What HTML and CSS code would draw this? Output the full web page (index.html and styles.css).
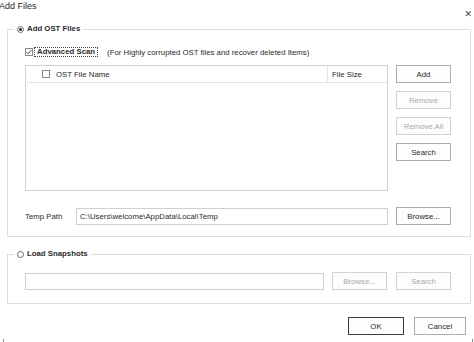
FILE: index.html
```html
<!DOCTYPE html>
<html lang="en">
<head>
    <meta charset="UTF-8">
    <meta name="viewport" content="width=device-width, initial-scale=1.0">
    <title>Add Files</title>
    <link rel="stylesheet" href="styles.css">
</head>
<body>

<div class="dialog">
    <div class="titlebar">
        <span class="title">Add Files</span>
        <span class="close">✕</span>
    </div>

    <fieldset class="group group-ost">
        <legend><span class="radio checked"></span>Add OST Files</legend>
        <div class="group-body">
            <div class="scan-row">
                <span class="checkbox">
                    <svg width="6" height="6" viewBox="0 0 6 6">
                        <path d="M0.6 3.1 L2.3 4.8 L5.5 0.9" stroke="#333" stroke-width="0.9" fill="none"/>
                    </svg>
                </span>
                <span class="scan-label">Advanced Scan</span>
                <span class="scan-note">(For Highly corrupted OST files and recover deleted Items)</span>
            </div>

            <div class="list-row">
                <div class="file-list">
                    <div class="list-head">
                        <div class="col col-name"><span class="checkbox"></span>OST File Name</div>
                        <div class="col col-size">File Size</div>
                    </div>
                </div>
                <div class="side-buttons">
                    <button class="btn">Add</button>
                    <button class="btn" disabled>Remove</button>
                    <button class="btn" disabled>Remove All</button>
                    <button class="btn">Search</button>
                </div>
            </div>

            <div class="path-row">
                <span class="path-label">Temp Path</span>
                <input class="field field-path" type="text" value="C:\Users\welcome\AppData\Local\Temp">
                <button class="btn">Browse...</button>
            </div>
        </div>
    </fieldset>

    <fieldset class="group group-snap">
        <legend><span class="radio"></span>Load Snapshots</legend>
        <div class="group-body">
            <div class="snap-row">
                <input class="field field-snap" type="text" value="">
                <button class="btn" disabled>Browse...</button>
                <button class="btn btn-search" disabled>Search</button>
            </div>
        </div>
    </fieldset>

    <div class="actions">
        <button class="btn btn-ok">OK</button>
        <button class="btn btn-cancel">Cancel</button>
    </div>

    <div class="frame-edge"></div>
</div>

</body>
</html>
```

FILE: styles.css
```css
body {
    margin: 0;
    background: #fff;
    font-family: "Liberation Sans", Arial, sans-serif;
    font-size: 7.8px;
    color: #2a2a2a;
}
.dialog {
    width: 474px;
    height: 342px;
    overflow: hidden;
}
.titlebar {
    height: 22px;
    display: flex;
    align-items: flex-start;
}
.title {
    flex: 1;
    font-size: 9px;
    line-height: 13px;
    margin-left: -1px;
}
.close {
    margin: 8px 2px 0 0;
    font-family: "DejaVu Sans", sans-serif;
    font-size: 9px;
    line-height: 12px;
    color: #444;
}

/* group boxes */
.group {
    margin: 1px 3px 0 7px;
    padding: 0;
    border: 1px solid #dcdcdc;
    min-width: 0;
}
.group legend {
    margin-left: 6px;
    padding: 0 3px;
    height: 12px;
    line-height: 12px;
    display: flex;
    align-items: center;
    gap: 3px;
    font-weight: bold;
}
.group-ost .group-body {
    padding: 11px 19px 11px 17px;
}
.group-snap {
    margin-top: 11px;
}
.group-snap .group-body {
    padding: 12px 19px 13px 17px;
}

.radio {
    width: 7px;
    height: 7px;
    box-sizing: border-box;
    border: 1px solid #6a6a6a;
    border-radius: 50%;
    display: flex;
    align-items: center;
    justify-content: center;
}
.radio.checked::after {
    content: "";
    width: 3px;
    height: 3px;
    border-radius: 50%;
    background: #222;
}
.checkbox {
    width: 8px;
    height: 8px;
    box-sizing: border-box;
    border: 1px solid #8a8a8a;
    display: flex;
    align-items: center;
    justify-content: center;
    flex-shrink: 0;
}

/* advanced scan */
.scan-row {
    display: flex;
    align-items: center;
    height: 12px;
}
.scan-label {
    margin-left: 1px;
    padding: 0 2px;
    border: 1px dotted #444;
    line-height: 8px;
    font-weight: bold;
}
.scan-note {
    margin-left: 9px;
}

/* file list */
.list-row {
    display: flex;
    gap: 8px;
    margin-top: 7px;
}
.file-list {
    width: 363px;
    height: 126px;
    box-sizing: border-box;
    border: 1px solid #d0d0d0;
}
.list-head {
    display: flex;
    height: 17px;
    box-sizing: border-box;
    margin-left: 1px;
    border-bottom: 1px solid #e2e2e2;
}
.col {
    display: flex;
    align-items: center;
}
.col-name {
    width: 301px;
    box-sizing: border-box;
    padding-left: 15px;
    gap: 6px;
    border-right: 1px solid #e2e2e2;
}
.col-size {
    padding-left: 4px;
}
.side-buttons {
    display: flex;
    flex-direction: column;
    gap: 8px;
}

.btn {
    width: 55px;
    height: 18px;
    padding: 0;
    border: 1px solid #adadad;
    background: #fdfdfd;
    font: inherit;
    color: inherit;
}
.btn:disabled {
    border-color: #d2d2d2;
    color: #a8a8a8;
}
.field {
    height: 17px;
    box-sizing: border-box;
    padding: 0 3px;
    border: 1px solid #cfcfcf;
    background: #fff;
    font: inherit;
    color: inherit;
    outline: none;
}

/* temp path */
.path-row {
    display: flex;
    align-items: center;
    height: 18px;
    margin-top: 16px;
}
.path-label {
    width: 51px;
}
.field-path {
    width: 312px;
    margin-right: 8px;
}

/* snapshots */
.snap-row {
    display: flex;
    align-items: center;
    height: 18px;
}
.field-snap {
    width: 299px;
    margin-right: 8px;
}
.btn-search {
    margin-left: 9px;
}

/* dialog buttons */
.actions {
    display: flex;
    justify-content: flex-end;
    gap: 10px;
    margin-top: 13px;
    padding-right: 8px;
}
.btn-ok {
    width: 56px;
    border-color: #3c3c3c;
}
.btn-cancel {
    width: 52px;
}
.frame-edge {
    height: 3px;
    margin: 4px 1px 0 3px;
    border-left: 1px solid #888;
    border-right: 1px solid #888;
}
```
